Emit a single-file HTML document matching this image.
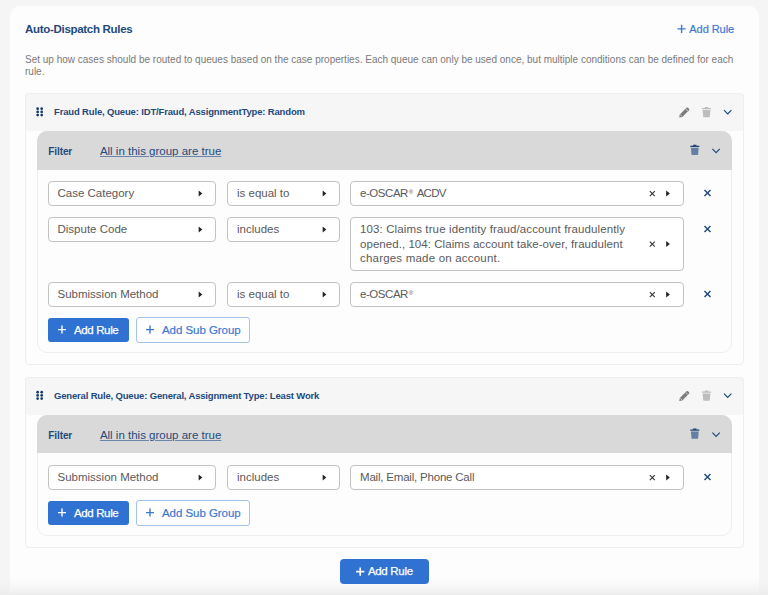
<!DOCTYPE html>
<html><head><meta charset="utf-8"><style>
html,body{margin:0;padding:0;width:768px;height:595px;overflow:hidden;background:#f5f5f5;font-family:"Liberation Sans", sans-serif;}
.t{position:absolute;white-space:nowrap;}
.b{position:absolute;overflow:visible;}
sup{font-size:6px;vertical-align:top;position:relative;top:-1px;margin-left:0.8px;margin-right:0.3px;color:#5a5a5a}
</style></head><body>
<div class="b" style="left:10px;top:6px;width:749px;height:614px;background:#fdfdfd;border-radius:10px;"></div><div class="t" style="left:25.00px;top:24.01px;font-size:11.5px;line-height:11.5px;color:#1f4a7c;font-weight:700;letter-spacing:-0.3px;">Auto-Dispatch Rules</div><svg class="b" style="left:677px;top:24px" width="10" height="10"><g transform="translate(0.50,0.80)"><path d="M4.1 0 V8.2 M0 4.1 H8.2" stroke="#3b78d3" stroke-width="1.4"/></g></svg><div class="t" style="left:689.30px;top:23.79px;font-size:11px;line-height:11px;color:#3b78d3;font-weight:400;letter-spacing:-0.05px;-webkit-text-stroke:0.2px #3b78d3;">Add Rule</div><div class="t" style="left:25.00px;top:54.93px;font-size:10px;line-height:10px;color:#7a7a7a;font-weight:400;letter-spacing:0px;">Set up how cases should be routed to queues based on the case properties. Each queue can only be used once, but multiple conditions can be defined for each</div><div class="t" style="left:25.00px;top:66.73px;font-size:10px;line-height:10px;color:#7a7a7a;font-weight:400;letter-spacing:0px;">rule.</div><div class="b" style="left:25px;top:93px;width:719px;height:272px;background:#fdfdfd;border:1px solid #eeeeee;border-radius:4px;box-sizing:border-box;"></div><div class="b" style="left:25px;top:93px;width:719px;height:38px;background:#f6f6f6;border:1px solid #eeeeee;border-bottom:none;border-radius:4px 4px 5px 5px;box-sizing:border-box;"></div><svg class="b" style="left:36px;top:107px" width="9" height="11"><g transform="translate(0.30,0.40)"><circle cx="1.35" cy="1.30" r="1.35" fill="#14386a"/><circle cx="1.35" cy="4.50" r="1.35" fill="#14386a"/><circle cx="1.35" cy="7.70" r="1.35" fill="#14386a"/><circle cx="5.40" cy="1.30" r="1.35" fill="#14386a"/><circle cx="5.40" cy="4.50" r="1.35" fill="#14386a"/><circle cx="5.40" cy="7.70" r="1.35" fill="#14386a"/></g></svg><div class="t" style="left:54.00px;top:107.16px;font-size:9.5px;line-height:9.5px;color:#1f4a7c;font-weight:700;letter-spacing:-0.16px;">Fraud Rule, Queue: IDT/Fraud, AssignmentType: Random</div><svg class="b" style="left:678px;top:106px" width="12" height="12"><g transform="translate(0.90,0.90)"><path d="M0.3 10.7 L0.9 7.6 L7.6 0.9 Q8.4 0.2 9.2 0.9 L10.1 1.8 Q10.8 2.6 10.1 3.4 L3.4 10.1 Z" fill="#7d7d7d"/><path d="M1.5 7.9 L3.1 9.5" stroke="#f6f6f6" stroke-width="0.7"/><path d="M6.9 2.1 L8.9 4.1" stroke="#f6f6f6" stroke-width="0.7"/></g></svg><svg class="b" style="left:701px;top:106px" width="11" height="12"><g transform="translate(0.50,0.80)"><path d="M3.3 0.2 H6.7 V1.2 H9.5 V2.4 H0.5 V1.2 H3.3 Z" fill="#bdbdbd"/><path d="M1.1 3.1 H8.9 L8.3 9.8 Q8.2 10.4 7.6 10.4 H2.4 Q1.8 10.4 1.7 9.8 Z" fill="#bdbdbd"/></g></svg><svg class="b" style="left:723px;top:109px" width="10" height="7"><g transform="translate(0.20,0.30)"><path d="M0.8 0.8 L4.5 4.6 L8.2 0.8" fill="none" stroke="#1f4a7c" stroke-width="1.2"/></g></svg><div class="b" style="left:37px;top:131px;width:695px;height:222px;background:#fdfdfd;border:1px solid #eeeeee;border-radius:10px;box-sizing:border-box;"></div><div class="b" style="left:37px;top:131px;width:695px;height:39px;background:#d9d9d9;border-radius:10px 10px 0 0;"></div><div class="t" style="left:48.30px;top:147.13px;font-size:10px;line-height:10px;color:#1f4a7c;font-weight:700;letter-spacing:-0.1px;">Filter</div><div class="t" style="left:99.90px;top:145.96px;font-size:11.5px;line-height:11.5px;color:#1f4a7c;font-weight:400;letter-spacing:0px;text-decoration:underline;text-decoration-thickness:1px;text-underline-offset:1px;text-decoration-color:#6a86ad;">All in this group are true</div><svg class="b" style="left:689px;top:144px" width="11" height="12"><g transform="translate(0.80,0.60)"><path d="M3.3 0.2 H6.7 V1.2 H9.5 V2.4 H0.5 V1.2 H3.3 Z" fill="#1f4577"/><path d="M1.1 3.1 H8.9 L8.3 9.8 Q8.2 10.4 7.6 10.4 H2.4 Q1.8 10.4 1.7 9.8 Z" fill="#647ea4"/></g></svg><svg class="b" style="left:711px;top:148px" width="10" height="7"><g transform="translate(0.60,0.00)"><path d="M0.8 0.8 L4.5 4.6 L8.2 0.8" fill="none" stroke="#1f4a7c" stroke-width="1.2"/></g></svg><div class="b" style="left:48px;top:181px;width:168px;height:25px;background:#fff;border:1px solid #c2c2c2;border-radius:4px;box-sizing:border-box;"></div><div class="t" style="left:57.50px;top:188.26px;font-size:11.5px;line-height:11.5px;color:#5a5a5a;font-weight:400;letter-spacing:0px;">Case Category</div><svg class="b" style="left:198px;top:190px" width="5" height="7"><g transform="translate(0.50,0.50)"><path d="M0.2 0 L3.8 3 L0.2 6 Z" fill="#222"/></g></svg><div class="b" style="left:227px;top:181px;width:113px;height:25px;background:#fff;border:1px solid #c2c2c2;border-radius:4px;box-sizing:border-box;"></div><div class="t" style="left:237.00px;top:188.26px;font-size:11.5px;line-height:11.5px;color:#5a5a5a;font-weight:400;letter-spacing:0px;">is equal to</div><svg class="b" style="left:322px;top:190px" width="5" height="7"><g transform="translate(0.50,0.50)"><path d="M0.2 0 L3.8 3 L0.2 6 Z" fill="#222"/></g></svg><div class="b" style="left:350px;top:181px;width:334px;height:25px;background:#fff;border:1px solid #c2c2c2;border-radius:4px;box-sizing:border-box;"></div><div class="t" style="left:360.00px;top:188.26px;font-size:11.5px;line-height:11.5px;color:#5a5a5a;font-weight:400;letter-spacing:0px;"><span style="letter-spacing:-0.45px">e-OSCAR</span><sup>®</sup> <span style="letter-spacing:-0.75px">ACDV</span></div><svg class="b" style="left:649px;top:190px" width="7" height="7"><g transform="translate(0.30,0.60)"><path d="M0.5 0.5 L5.5 5.5 M5.5 0.5 L0.5 5.5" stroke="#333" stroke-width="1.1"/></g></svg><svg class="b" style="left:666px;top:190px" width="5" height="7"><g transform="translate(0.00,0.50)"><path d="M0.2 0 L3.8 3 L0.2 6 Z" fill="#222"/></g></svg><svg class="b" style="left:704px;top:189px" width="8" height="8"><g transform="translate(0.00,0.50)"><path d="M0.5 0.5 L6.5 6.5 M6.5 0.5 L0.5 6.5" stroke="#24497a" stroke-width="1.45"/></g></svg><div class="b" style="left:48px;top:217px;width:168px;height:25px;background:#fff;border:1px solid #c2c2c2;border-radius:4px;box-sizing:border-box;"></div><div class="t" style="left:57.50px;top:224.26px;font-size:11.5px;line-height:11.5px;color:#5a5a5a;font-weight:400;letter-spacing:0px;">Dispute Code</div><svg class="b" style="left:198px;top:226px" width="5" height="7"><g transform="translate(0.50,0.50)"><path d="M0.2 0 L3.8 3 L0.2 6 Z" fill="#222"/></g></svg><div class="b" style="left:227px;top:217px;width:113px;height:25px;background:#fff;border:1px solid #c2c2c2;border-radius:4px;box-sizing:border-box;"></div><div class="t" style="left:237.00px;top:224.26px;font-size:11.5px;line-height:11.5px;color:#5a5a5a;font-weight:400;letter-spacing:0px;">includes</div><svg class="b" style="left:322px;top:226px" width="5" height="7"><g transform="translate(0.50,0.50)"><path d="M0.2 0 L3.8 3 L0.2 6 Z" fill="#222"/></g></svg><div class="b" style="left:350px;top:217px;width:334px;height:54px;background:#fff;border:1px solid #c2c2c2;border-radius:4px;box-sizing:border-box;"></div><div class="t" style="left:360.00px;top:224.26px;font-size:11.5px;line-height:11.5px;color:#5a5a5a;font-weight:400;letter-spacing:0.12px;">103: Claims true identity fraud/account fraudulently</div><div class="t" style="left:360.00px;top:238.76px;font-size:11.5px;line-height:11.5px;color:#5a5a5a;font-weight:400;letter-spacing:0.05px;">opened., 104: Claims account take-over, fraudulent</div><div class="t" style="left:360.00px;top:253.26px;font-size:11.5px;line-height:11.5px;color:#5a5a5a;font-weight:400;letter-spacing:0.2px;">charges made on account.</div><svg class="b" style="left:649px;top:241px" width="7" height="7"><g transform="translate(0.30,0.10)"><path d="M0.5 0.5 L5.5 5.5 M5.5 0.5 L0.5 5.5" stroke="#333" stroke-width="1.1"/></g></svg><svg class="b" style="left:666px;top:241px" width="5" height="7"><g transform="translate(0.00,0.00)"><path d="M0.2 0 L3.8 3 L0.2 6 Z" fill="#222"/></g></svg><svg class="b" style="left:704px;top:225px" width="8" height="8"><g transform="translate(0.00,0.50)"><path d="M0.5 0.5 L6.5 6.5 M6.5 0.5 L0.5 6.5" stroke="#24497a" stroke-width="1.45"/></g></svg><div class="b" style="left:48px;top:282px;width:168px;height:25px;background:#fff;border:1px solid #c2c2c2;border-radius:4px;box-sizing:border-box;"></div><div class="t" style="left:57.50px;top:289.26px;font-size:11.5px;line-height:11.5px;color:#5a5a5a;font-weight:400;letter-spacing:0px;">Submission Method</div><svg class="b" style="left:198px;top:291px" width="5" height="7"><g transform="translate(0.50,0.50)"><path d="M0.2 0 L3.8 3 L0.2 6 Z" fill="#222"/></g></svg><div class="b" style="left:227px;top:282px;width:113px;height:25px;background:#fff;border:1px solid #c2c2c2;border-radius:4px;box-sizing:border-box;"></div><div class="t" style="left:237.00px;top:289.26px;font-size:11.5px;line-height:11.5px;color:#5a5a5a;font-weight:400;letter-spacing:0px;">is equal to</div><svg class="b" style="left:322px;top:291px" width="5" height="7"><g transform="translate(0.50,0.50)"><path d="M0.2 0 L3.8 3 L0.2 6 Z" fill="#222"/></g></svg><div class="b" style="left:350px;top:282px;width:334px;height:25px;background:#fff;border:1px solid #c2c2c2;border-radius:4px;box-sizing:border-box;"></div><div class="t" style="left:360.00px;top:289.26px;font-size:11.5px;line-height:11.5px;color:#5a5a5a;font-weight:400;letter-spacing:0px;"><span style="letter-spacing:-0.45px">e-OSCAR</span><sup>®</sup></div><svg class="b" style="left:649px;top:291px" width="7" height="7"><g transform="translate(0.30,0.60)"><path d="M0.5 0.5 L5.5 5.5 M5.5 0.5 L0.5 5.5" stroke="#333" stroke-width="1.1"/></g></svg><svg class="b" style="left:666px;top:291px" width="5" height="7"><g transform="translate(0.00,0.50)"><path d="M0.2 0 L3.8 3 L0.2 6 Z" fill="#222"/></g></svg><svg class="b" style="left:704px;top:290px" width="8" height="8"><g transform="translate(0.00,0.50)"><path d="M0.5 0.5 L6.5 6.5 M6.5 0.5 L0.5 6.5" stroke="#24497a" stroke-width="1.45"/></g></svg><div class="b" style="left:48px;top:318px;width:81px;height:24px;background:#2f72d2;border-radius:3px;"></div><svg class="b" style="left:58px;top:325px" width="9" height="9"><g transform="translate(0.00,0.60)"><path d="M4.0 0 V8 M0 4.0 H8" stroke="#fff" stroke-width="1.4"/></g></svg><div class="t" style="left:73.90px;top:325.46px;font-size:11.5px;line-height:11.5px;color:#fff;font-weight:400;letter-spacing:-0.35px;-webkit-text-stroke:0.25px #fff;">Add Rule</div><div class="b" style="left:136px;top:317px;width:114px;height:26px;background:#fff;border:1px solid #a6c3ea;border-radius:3px;box-sizing:border-box;"></div><svg class="b" style="left:146px;top:325px" width="9" height="9"><g transform="translate(0.00,0.60)"><path d="M4.0 0 V8 M0 4.0 H8" stroke="#3b78d3" stroke-width="1.4"/></g></svg><div class="t" style="left:162.00px;top:325.46px;font-size:11.5px;line-height:11.5px;color:#3b78d3;font-weight:400;letter-spacing:-0.05px;-webkit-text-stroke:0.2px #3b78d3;">Add Sub Group</div><div class="b" style="left:25px;top:376.5px;width:719px;height:171.5px;background:#fdfdfd;border:1px solid #eeeeee;border-radius:4px;box-sizing:border-box;"></div><div class="b" style="left:25px;top:376.5px;width:719px;height:38.30000000000001px;background:#f6f6f6;border:1px solid #eeeeee;border-bottom:none;border-radius:4px 4px 5px 5px;box-sizing:border-box;"></div><svg class="b" style="left:36px;top:390px" width="9" height="11"><g transform="translate(0.30,0.90)"><circle cx="1.35" cy="1.30" r="1.35" fill="#14386a"/><circle cx="1.35" cy="4.50" r="1.35" fill="#14386a"/><circle cx="1.35" cy="7.70" r="1.35" fill="#14386a"/><circle cx="5.40" cy="1.30" r="1.35" fill="#14386a"/><circle cx="5.40" cy="4.50" r="1.35" fill="#14386a"/><circle cx="5.40" cy="7.70" r="1.35" fill="#14386a"/></g></svg><div class="t" style="left:54.00px;top:390.66px;font-size:9.5px;line-height:9.5px;color:#1f4a7c;font-weight:700;letter-spacing:-0.17px;">General Rule, Queue: General, Assignment Type: Least Work</div><svg class="b" style="left:678px;top:390px" width="12" height="12"><g transform="translate(0.90,0.40)"><path d="M0.3 10.7 L0.9 7.6 L7.6 0.9 Q8.4 0.2 9.2 0.9 L10.1 1.8 Q10.8 2.6 10.1 3.4 L3.4 10.1 Z" fill="#7d7d7d"/><path d="M1.5 7.9 L3.1 9.5" stroke="#f6f6f6" stroke-width="0.7"/><path d="M6.9 2.1 L8.9 4.1" stroke="#f6f6f6" stroke-width="0.7"/></g></svg><svg class="b" style="left:701px;top:390px" width="11" height="12"><g transform="translate(0.50,0.30)"><path d="M3.3 0.2 H6.7 V1.2 H9.5 V2.4 H0.5 V1.2 H3.3 Z" fill="#bdbdbd"/><path d="M1.1 3.1 H8.9 L8.3 9.8 Q8.2 10.4 7.6 10.4 H2.4 Q1.8 10.4 1.7 9.8 Z" fill="#bdbdbd"/></g></svg><svg class="b" style="left:723px;top:392px" width="10" height="7"><g transform="translate(0.20,0.80)"><path d="M0.8 0.8 L4.5 4.6 L8.2 0.8" fill="none" stroke="#1f4a7c" stroke-width="1.2"/></g></svg><div class="b" style="left:37px;top:414.8px;width:695px;height:121.49999999999994px;background:#fdfdfd;border:1px solid #eeeeee;border-radius:10px;box-sizing:border-box;"></div><div class="b" style="left:37px;top:414.8px;width:695px;height:38.30000000000001px;background:#d9d9d9;border-radius:10px 10px 0 0;"></div><div class="t" style="left:48.30px;top:430.93px;font-size:10px;line-height:10px;color:#1f4a7c;font-weight:700;letter-spacing:-0.1px;">Filter</div><div class="t" style="left:99.90px;top:429.76px;font-size:11.5px;line-height:11.5px;color:#1f4a7c;font-weight:400;letter-spacing:0px;text-decoration:underline;text-decoration-thickness:1px;text-underline-offset:1px;text-decoration-color:#6a86ad;">All in this group are true</div><svg class="b" style="left:689px;top:428px" width="11" height="12"><g transform="translate(0.80,0.40)"><path d="M3.3 0.2 H6.7 V1.2 H9.5 V2.4 H0.5 V1.2 H3.3 Z" fill="#1f4577"/><path d="M1.1 3.1 H8.9 L8.3 9.8 Q8.2 10.4 7.6 10.4 H2.4 Q1.8 10.4 1.7 9.8 Z" fill="#647ea4"/></g></svg><svg class="b" style="left:711px;top:431px" width="10" height="7"><g transform="translate(0.60,0.80)"><path d="M0.8 0.8 L4.5 4.6 L8.2 0.8" fill="none" stroke="#1f4a7c" stroke-width="1.2"/></g></svg><div class="b" style="left:48px;top:465px;width:168px;height:25px;background:#fff;border:1px solid #c2c2c2;border-radius:4px;box-sizing:border-box;"></div><div class="t" style="left:57.50px;top:472.26px;font-size:11.5px;line-height:11.5px;color:#5a5a5a;font-weight:400;letter-spacing:0px;">Submission Method</div><svg class="b" style="left:198px;top:474px" width="5" height="7"><g transform="translate(0.50,0.50)"><path d="M0.2 0 L3.8 3 L0.2 6 Z" fill="#222"/></g></svg><div class="b" style="left:227px;top:465px;width:113px;height:25px;background:#fff;border:1px solid #c2c2c2;border-radius:4px;box-sizing:border-box;"></div><div class="t" style="left:237.00px;top:472.26px;font-size:11.5px;line-height:11.5px;color:#5a5a5a;font-weight:400;letter-spacing:0px;">includes</div><svg class="b" style="left:322px;top:474px" width="5" height="7"><g transform="translate(0.50,0.50)"><path d="M0.2 0 L3.8 3 L0.2 6 Z" fill="#222"/></g></svg><div class="b" style="left:350px;top:465px;width:334px;height:25px;background:#fff;border:1px solid #c2c2c2;border-radius:4px;box-sizing:border-box;"></div><div class="t" style="left:360.00px;top:472.26px;font-size:11.5px;line-height:11.5px;color:#5a5a5a;font-weight:400;letter-spacing:-0.2px;">Mail, Email, Phone Call</div><svg class="b" style="left:649px;top:474px" width="7" height="7"><g transform="translate(0.30,0.60)"><path d="M0.5 0.5 L5.5 5.5 M5.5 0.5 L0.5 5.5" stroke="#333" stroke-width="1.1"/></g></svg><svg class="b" style="left:666px;top:474px" width="5" height="7"><g transform="translate(0.00,0.50)"><path d="M0.2 0 L3.8 3 L0.2 6 Z" fill="#222"/></g></svg><svg class="b" style="left:704px;top:473px" width="8" height="8"><g transform="translate(0.00,0.50)"><path d="M0.5 0.5 L6.5 6.5 M6.5 0.5 L0.5 6.5" stroke="#24497a" stroke-width="1.45"/></g></svg><div class="b" style="left:48px;top:501px;width:81px;height:24px;background:#2f72d2;border-radius:3px;"></div><svg class="b" style="left:58px;top:508px" width="9" height="9"><g transform="translate(0.00,0.60)"><path d="M4.0 0 V8 M0 4.0 H8" stroke="#fff" stroke-width="1.4"/></g></svg><div class="t" style="left:73.90px;top:508.46px;font-size:11.5px;line-height:11.5px;color:#fff;font-weight:400;letter-spacing:-0.35px;-webkit-text-stroke:0.25px #fff;">Add Rule</div><div class="b" style="left:136px;top:500px;width:114px;height:26px;background:#fff;border:1px solid #a6c3ea;border-radius:3px;box-sizing:border-box;"></div><svg class="b" style="left:146px;top:508px" width="9" height="9"><g transform="translate(0.00,0.60)"><path d="M4.0 0 V8 M0 4.0 H8" stroke="#3b78d3" stroke-width="1.4"/></g></svg><div class="t" style="left:162.00px;top:508.46px;font-size:11.5px;line-height:11.5px;color:#3b78d3;font-weight:400;letter-spacing:-0.05px;-webkit-text-stroke:0.2px #3b78d3;">Add Sub Group</div><div class="b" style="left:0px;top:578px;width:768px;height:17px;background:linear-gradient(to bottom, rgba(238,238,238,0), rgba(238,238,238,0.5) 60%, rgba(236,236,236,1));"></div><div class="b" style="left:340px;top:559.4px;width:89px;height:24.200000000000045px;background:#2f72d2;border-radius:4px;"></div><svg class="b" style="left:356px;top:567px" width="10" height="10"><g transform="translate(0.10,0.50)"><path d="M4.1 0 V8.2 M0 4.1 H8.2" stroke="#fff" stroke-width="1.6"/></g></svg><div class="t" style="left:367.90px;top:565.86px;font-size:11.5px;line-height:11.5px;color:#fff;font-weight:400;letter-spacing:-0.3px;-webkit-text-stroke:0.25px #fff;">Add Rule</div>
</body></html>
